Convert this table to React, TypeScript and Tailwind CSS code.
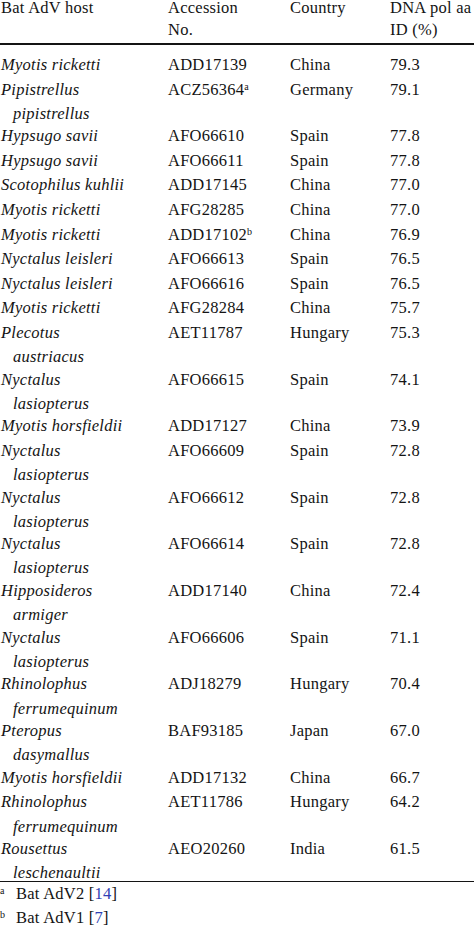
const rows: { host: string[]; acc: string; sup?: string; country: string; id: string }[] = [
  { host: ["Myotis ricketti"], acc: "ADD17139", country: "China", id: "79.3" },
  { host: ["Pipistrellus", "pipistrellus"], acc: "ACZ56364", sup: "a", country: "Germany", id: "79.1" },
  { host: ["Hypsugo savii"], acc: "AFO66610", country: "Spain", id: "77.8" },
  { host: ["Hypsugo savii"], acc: "AFO66611", country: "Spain", id: "77.8" },
  { host: ["Scotophilus kuhlii"], acc: "ADD17145", country: "China", id: "77.0" },
  { host: ["Myotis ricketti"], acc: "AFG28285", country: "China", id: "77.0" },
  { host: ["Myotis ricketti"], acc: "ADD17102", sup: "b", country: "China", id: "76.9" },
  { host: ["Nyctalus leisleri"], acc: "AFO66613", country: "Spain", id: "76.5" },
  { host: ["Nyctalus leisleri"], acc: "AFO66616", country: "Spain", id: "76.5" },
  { host: ["Myotis ricketti"], acc: "AFG28284", country: "China", id: "75.7" },
  { host: ["Plecotus", "austriacus"], acc: "AET11787", country: "Hungary", id: "75.3" },
  { host: ["Nyctalus", "lasiopterus"], acc: "AFO66615", country: "Spain", id: "74.1" },
  { host: ["Myotis horsfieldii"], acc: "ADD17127", country: "China", id: "73.9" },
  { host: ["Nyctalus", "lasiopterus"], acc: "AFO66609", country: "Spain", id: "72.8" },
  { host: ["Nyctalus", "lasiopterus"], acc: "AFO66612", country: "Spain", id: "72.8" },
  { host: ["Nyctalus", "lasiopterus"], acc: "AFO66614", country: "Spain", id: "72.8" },
  { host: ["Hipposideros", "armiger"], acc: "ADD17140", country: "China", id: "72.4" },
  { host: ["Nyctalus", "lasiopterus"], acc: "AFO66606", country: "Spain", id: "71.1" },
  { host: ["Rhinolophus", "ferrumequinum"], acc: "ADJ18279", country: "Hungary", id: "70.4" },
  { host: ["Pteropus", "dasymallus"], acc: "BAF93185", country: "Japan", id: "67.0" },
  { host: ["Myotis horsfieldii"], acc: "ADD17132", country: "China", id: "66.7" },
  { host: ["Rhinolophus", "ferrumequinum"], acc: "AET11786", country: "Hungary", id: "64.2" },
  { host: ["Rousettus", "leschenaultii"], acc: "AEO20260", country: "India", id: "61.5" },
];

const cols = "grid grid-cols-[168px_122px_100px_84px]";

export default function App() {
  return (
    <div className="h-[928px] w-[474px] overflow-hidden bg-white font-['Liberation_Serif',serif] text-[16.5px] tracking-[0.25px] text-[#141414]">
      <div className={`${cols} mt-[-3px] pb-[2px] leading-[22px]`}>
        <div className="pl-px">Bat AdV host</div>
        <div>
          Accession
          <br />
          No.
        </div>
        <div>Country</div>
        <div className="whitespace-nowrap">
          DNA pol aa
          <br />
          ID (%)
        </div>
      </div>
      <div className="h-[2px] bg-[#141414]" />

      <div className="pt-[9px]">
        {rows.map((r, i) => (
          <div
            key={i}
            className={`${cols} leading-[22.1px] ${r.host[1] ? "pb-[0.5px]" : "pb-[2.5px]"}`}
          >
            <div className="italic">
              <div className="pl-px">{r.host[0]}</div>
              {r.host[1] ? <div className="pl-[13px] pt-[2px]">{r.host[1]}</div> : null}
            </div>
            <div>
              {r.acc}
              {r.sup ? <sup className="text-[10px]">{r.sup}</sup> : null}
            </div>
            <div>{r.country}</div>
            <div>{r.id}</div>
          </div>
        ))}
      </div>

      <div className="mt-[-4px] h-px bg-[#141414]" />
      <div className="leading-[24px]">
        <div className="flex">
          <span className="w-[16px] text-[10px] leading-[18px]">a</span>
          <span>
            Bat AdV2 [<span className="text-[#2f3fb5]">14</span>]
          </span>
        </div>
        <div className="flex">
          <span className="w-[16px] text-[10px] leading-[18px]">b</span>
          <span>
            Bat AdV1 [<span className="text-[#2f3fb5]">7</span>]
          </span>
        </div>
      </div>
    </div>
  );
}
